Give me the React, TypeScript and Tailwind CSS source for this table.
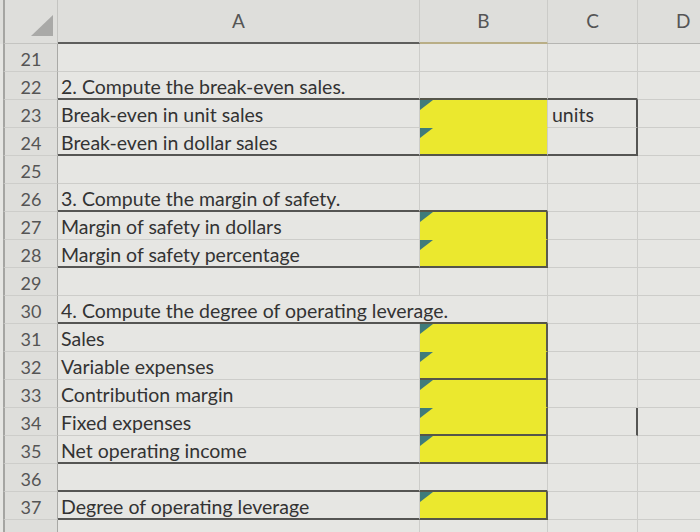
import React from "react";

type Row = {
  n: number;
  a?: string;
  c?: string;
  fill?: boolean; // yellow input cell in B
  thickA?: boolean; // thick bottom under A
  thickB?: boolean; // thick bottom under B
  thickC?: boolean; // thick bottom under C
  rightB?: boolean; // thick right edge of B
  rightC?: boolean; // thick right edge of C
  overflow?: boolean;
};

const rows: Row[] = [
  { n: 21 },
  { n: 22, a: "2. Compute the break-even sales.", thickA: true, thickB: true, thickC: true },
  { n: 23, a: "Break-even in unit sales", fill: true, c: "units", rightC: true },
  { n: 24, a: "Break-even in dollar sales", fill: true, thickA: true, thickB: true, thickC: true, rightC: true },
  { n: 25 },
  { n: 26, a: "3. Compute the margin of safety.", thickA: true, thickB: true },
  { n: 27, a: "Margin of safety in dollars", fill: true, rightB: true },
  { n: 28, a: "Margin of safety percentage", fill: true, thickA: true, thickB: true, rightB: true },
  { n: 29 },
  { n: 30, a: "4. Compute the degree of operating leverage.", thickA: true, thickB: true, overflow: true },
  { n: 31, a: "Sales", fill: true, rightB: true },
  { n: 32, a: "Variable expenses", fill: true, thickB: true, rightB: true },
  { n: 33, a: "Contribution margin", fill: true, rightB: true },
  { n: 34, a: "Fixed expenses", fill: true, thickB: true, rightB: true, rightC: true },
  { n: 35, a: "Net operating income", fill: true, thickA: true, thickB: true, rightB: true },
  { n: 36, thickA: true, thickB: true },
  { n: 37, a: "Degree of operating leverage", fill: true, thickA: true, thickB: true, rightB: true },
  { n: 38 },
];

function Marker() {
  return (
    <svg width="13" height="11" viewBox="0 0 13 11" className="absolute left-0 top-0">
      <polygon points="0,0 13,0 0,10" fill="#3f7b7a" />
    </svg>
  );
}

export default function App() {
  return (
    <div
      className="w-[700px] h-[532px] overflow-hidden bg-[#e6e6e3] text-[#333333]"
      style={{ fontFamily: "Lato, 'Open Sans', sans-serif" }}
    >
      {/* column headers */}
      <div className="flex h-[44px] bg-[#dededb]">
        <div className="w-[55px] shrink-0 relative border-l-2 border-l-[#a5a5a2] ml-[3px] border-r border-r-[#c4c4c1] border-b border-b-[#c4c4c1]">
          <svg width="22" height="21" viewBox="0 0 22 21" className="absolute left-[26px] top-[15px]">
            <polygon points="22,0 22,21 0,21" fill="#a9a9a7" />
          </svg>
        </div>
        <div className="w-[362px] shrink-0 flex items-center justify-center text-[19px] text-[#555] border-r border-r-[#cbcbc8] border-b-2 border-b-[#5e5e5c]">
          A
        </div>
        <div className="w-[128px] shrink-0 flex items-center justify-center text-[19px] text-[#555] border-r border-r-[#cbcbc8] border-b-2 border-b-[#b9ae86]">
          B
        </div>
        <div className="w-[90px] shrink-0 flex items-center justify-center text-[19px] text-[#555] border-r border-r-[#cbcbc8] border-b border-b-[#b5b5b2]">
          C
        </div>
        <div className="flex-1 flex items-center pl-[38px] text-[19px] text-[#555] border-b border-b-[#b5b5b2]">
          D
        </div>
      </div>

      {rows.map((r) => (
        <div key={r.n} className="flex h-[28px]">
          <div className="w-[55px] shrink-0 ml-[3px] border-l-2 border-l-[#a5a5a2] bg-[#dededb] border-r border-r-[#a9a9a6] border-b border-b-[#cdcdca] flex items-center justify-center pt-[3px] text-[18px] text-[#555]">
            {r.n < 38 ? r.n : ""}
          </div>
          <div
            className={
              "w-[362px] shrink-0 relative z-10 flex items-center pl-[3px] pt-[3px] text-[19.5px] whitespace-nowrap " +
              (r.overflow ? "" : "border-r border-r-[#cdcdca] ") +
              (r.thickA ? "border-b-2 border-b-[#555553]" : "border-b border-b-[#cdcdca]")
            }
          >
            {r.a}
          </div>
          <div
            className={
              "w-[128px] shrink-0 relative " +
              (r.fill ? "bg-[#ebe82e] " : "") +
              (r.rightB ? "border-r-2 border-r-[#5a5a50] " : "border-r border-r-[#cdcdca] ") +
              (r.thickB ? "border-b-2 border-b-[#55554a]" : r.fill ? "border-b border-b-[#ebe82e]" : "border-b border-b-[#cdcdca]")
            }
          >
            {r.fill && <Marker />}
          </div>
          <div
            className={
              "w-[90px] shrink-0 flex items-center pl-[4px] pt-[3px] text-[19.5px] " +
              (r.rightC ? "border-r-2 border-r-[#555553] " : "border-r border-r-[#cdcdca] ") +
              (r.thickC ? "border-b-2 border-b-[#555553]" : "border-b border-b-[#cdcdca]")
            }
          >
            {r.c}
          </div>
          <div className="flex-1 border-b border-b-[#cdcdca]" />
        </div>
      ))}
    </div>
  );
}
